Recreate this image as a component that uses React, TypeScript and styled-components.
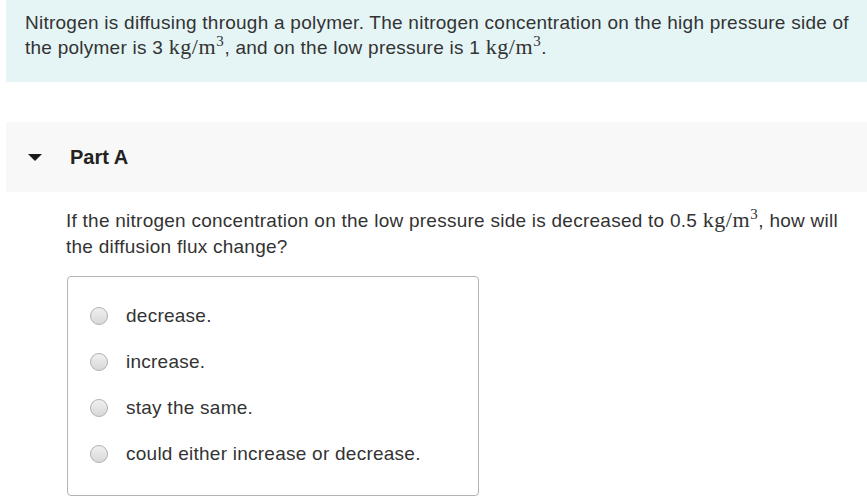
import styled, { createGlobalStyle } from "styled-components";

const GlobalStyle = createGlobalStyle`
  body {
    margin: 0;
    background: #ffffff;
    font-family: "Liberation Sans", Arial, sans-serif;
    color: #333333;
  }
`;

const options = [
  "decrease.",
  "increase.",
  "stay the same.",
  "could either increase or decrease.",
];

function Unit() {
  return (
    <MathUnit>
      kg/m<Sup>3</Sup>
    </MathUnit>
  );
}

function App() {
  return (
    <>
      <GlobalStyle />
      <Page>
        <Intro>
          Nitrogen is diffusing through a polymer. The nitrogen concentration on the high pressure side of
          the polymer is 3 <Unit />, and on the low pressure is 1 <Unit />.
        </Intro>

        <PartHeader>
          <Caret />
          <PartTitle>Part A</PartTitle>
        </PartHeader>

        <Question>
          If the nitrogen concentration on the low pressure side is decreased to 0.5 <Unit />, how will
          the diffusion flux change?
        </Question>

        <Choices>
          {options.map((o) => (
            <Choice key={o}>
              <Radio />
              <ChoiceText>{o}</ChoiceText>
            </Choice>
          ))}
        </Choices>
      </Page>
    </>
  );
}

const Page = styled.div`
  display: flex;
  flex-direction: column;
  font-size: 19px;
  letter-spacing: 0.25px;
`;

const Intro = styled.div`
  margin-left: 6px;
  padding: 10px 8px 12px 19px;
  background: #e5f5f6;
  line-height: 25px;
  height: 60px;
`;

const MathUnit = styled.span`
  font-family: "Liberation Serif", "DejaVu Serif", serif;
  font-size: 22px;
  letter-spacing: 0.6px;
  line-height: 0;
`;

const Sup = styled.sup`
  font-size: 15px;
  line-height: 0;
  vertical-align: 8px;
`;

const PartHeader = styled.div`
  margin: 40px 0 0 6px;
  height: 70px;
  background: #f8f8f8;
  display: flex;
  align-items: center;
`;

const Caret = styled.span`
  width: 0;
  height: 0;
  margin: 0 28px 0 22px;
  border-left: 7px solid transparent;
  border-right: 7px solid transparent;
  border-top: 7px solid #1a1a1a;
`;

const PartTitle = styled.span`
  font-weight: bold;
  font-size: 20px;
  letter-spacing: 0;
  color: #222222;
`;

const Question = styled.div`
  margin: 16px 0 0 66px;
  width: 790px;
  line-height: 26px;
`;

const Choices = styled.div`
  margin: 16px 0 0 67px;
  width: 388px;
  height: 200px;
  padding: 16px 0 2px 22px;
  box-sizing: content-box;
  border: 1px solid #b3b3b3;
  border-radius: 4px;
  display: flex;
  flex-direction: column;
`;

const Choice = styled.div`
  height: 46px;
  display: flex;
  align-items: center;
`;

const Radio = styled.span`
  flex: none;
  width: 16px;
  height: 16px;
  border-radius: 50%;
  border: 1px solid #b0b0b0;
  background: linear-gradient(#f0f0f0, #d8d8d8);
  margin-right: 18px;
`;

const ChoiceText = styled.span`
  color: #333333;
`;

export default App;
